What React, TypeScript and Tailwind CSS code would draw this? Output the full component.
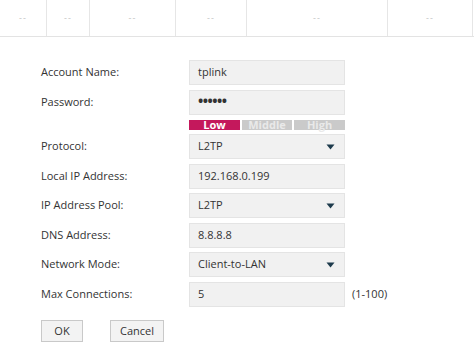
import { ReactNode } from "react";

const COLUMNS = [
  { id: "c1", width: "w-[47px]" },
  { id: "c2", width: "w-[43px]" },
  { id: "c3", width: "w-[86px]" },
  { id: "c4", width: "w-[71px]" },
  { id: "c5", width: "w-[141px]" },
  { id: "c6", width: "w-[85px]" },
];

function CaretDown() {
  return (
    <svg width="9" height="6" viewBox="0 0 9 6" className="ml-auto">
      <path d="M0.5 0.5 L8.5 0.5 L4.5 5.5 Z" fill="#1d3b4c" />
    </svg>
  );
}

function Field({ children, select = false }: { children: ReactNode; select?: boolean }) {
  return (
    <div className="w-[156px] h-[25px] flex items-center pl-[8px] pr-[9px] bg-[#f1f1f1] border border-[#e4e4e4] text-[#333]">
      <span>{children}</span>
      {select && <CaretDown />}
    </div>
  );
}

function Row({
  label,
  className = "",
  children,
}: {
  label: string;
  className?: string;
  children: ReactNode;
}) {
  return (
    <div className={`flex items-center ${className}`}>
      <div className="w-[148px] text-[#333]">{label}</div>
      {children}
    </div>
  );
}

export default function App() {
  return (
    <div
      className="w-[474px] h-[354px] bg-white overflow-hidden text-[11px]"
      style={{ fontFamily: '"Open Sans", "DejaVu Sans", sans-serif' }}
    >
      {/* Table row cut off at the top */}
      <div className="flex h-[37px] border-b border-[#e3e3e3] w-[474px]">
        {COLUMNS.map((col) => (
          <div
            key={col.id}
            className={`${col.width} h-full flex items-center justify-center text-[9px] tracking-[1px] text-[#c4c4c4] border-r border-[#e6e6e6]`}
          >
            --
          </div>
        ))}
      </div>

      {/* Form */}
      <div className="pl-[41px] pt-[23px] flex flex-col">
        <Row label="Account Name:">
          <Field>tplink</Field>
        </Row>
        <Row label="Password:" className="mt-[5px]">
          <Field>
            <span className="text-[14px] font-bold tracking-[-0.5px] leading-none">••••••</span>
          </Field>
        </Row>
        <div className="flex mt-[5px] ml-[148px] h-[10px] w-[156px] gap-[2px] text-[11px] font-bold leading-[10px]">
          <div className="w-[51px] bg-[#c4185c] text-white text-center">Low</div>
          <div className="w-[50px] bg-[#cacaca] text-[#e9e9e9] text-center">Middle</div>
          <div className="flex-1 bg-[#cacaca] text-[#e9e9e9] text-center">High</div>
        </div>
        <Row label="Protocol:" className="mt-[4px]">
          <Field select>L2TP</Field>
        </Row>
        <Row label="Local IP Address:" className="mt-[5px]">
          <Field>192.168.0.199</Field>
        </Row>
        <Row label="IP Address Pool:" className="mt-[4px]">
          <Field select>L2TP</Field>
        </Row>
        <Row label="DNS Address:" className="mt-[5px]">
          <Field>8.8.8.8</Field>
        </Row>
        <Row label="Network Mode:" className="mt-[4px]">
          <Field select>Client-to-LAN</Field>
        </Row>
        <Row label="Max Connections:" className="mt-[5px]">
          <Field>5</Field>
          <span className="ml-[7px] text-[#333]">(1-100)</span>
        </Row>

        <div className="flex gap-[27px] mt-[13px]">
          <button className="w-[42px] h-[22px] border border-[#c9c9c9] bg-[#f3f3f3] text-[#333] text-[11px]">
            OK
          </button>
          <button className="w-[54px] h-[22px] border border-[#c9c9c9] bg-[#f3f3f3] text-[#333] text-[11px]">
            Cancel
          </button>
        </div>
      </div>
    </div>
  );
}
